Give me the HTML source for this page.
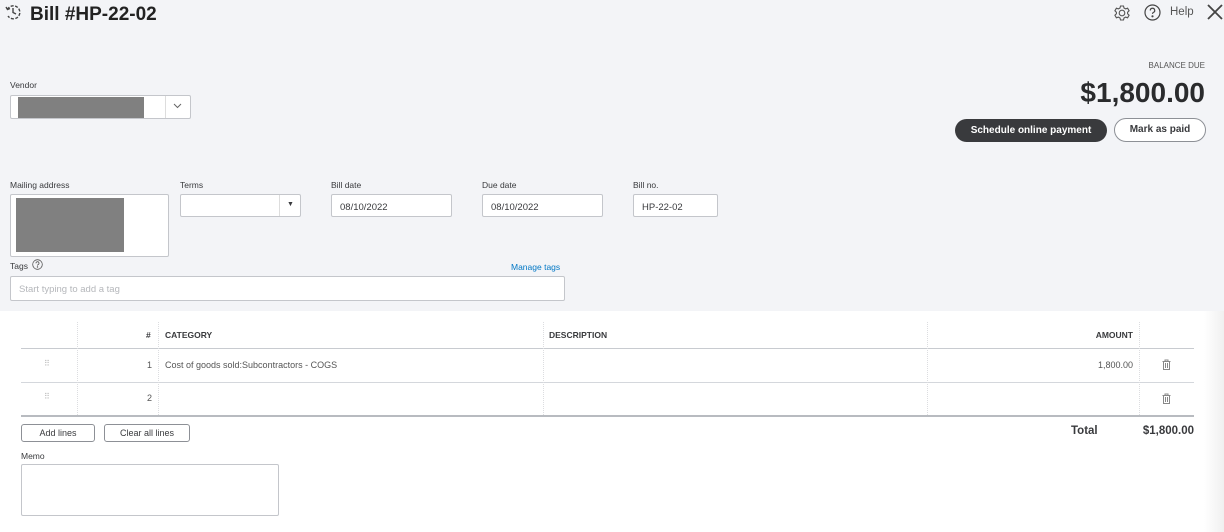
<!DOCTYPE html>
<html><head><meta charset="utf-8"><style>
*{box-sizing:border-box;margin:0;padding:0}
body{width:1224px;height:532px;overflow:hidden;background:#fff;font-family:"Liberation Sans",sans-serif;color:#393a3d;position:relative}
.top{position:absolute;left:0;top:0;width:1224px;height:311px;background:#f3f4f7}
.a{position:absolute}
.lbl{font-size:8.5px;color:#393a3d}
.box{position:absolute;background:#fff;border:1px solid #c4c6cb;border-radius:2px}
.in{font-size:9.5px;color:#393a3d;padding:7px 0 0 8px}
.btn{position:absolute;border:1px solid #8d9096;border-radius:3px;background:#fff;font-size:9px;text-align:center;line-height:16px}
.grad{position:absolute;right:0;top:311px;width:20px;height:221px;background:linear-gradient(90deg,#fff,#f0f0f0)}
.hl{position:absolute;height:1px;background:#d4d7dc}
.vl{position:absolute;width:0;border-left:1px dotted #dcdde0}
.th{position:absolute;font-size:8.5px;font-weight:bold;top:330px}
.td{position:absolute;font-size:9px;color:#555}
</style></head><body>
<div class="top"></div>
<div class="grad"></div>
<svg class="a" style="left:4px;top:3px" width="18" height="18" viewBox="0 0 18 18" fill="none" stroke="#444" stroke-width="1.4"><path d="M3.5 6.5A6.5 6.5 0 1 1 4 13" stroke-dasharray="3 1.5"/><path d="M9 5v4.5l3 1.5"/><path d="M2 4l1.5 2.5 2.5-1"/></svg>
<div class="a" style="left:30px;top:4px;font-size:19px;font-weight:bold;color:#222">Bill #HP-22-02</div>
<svg class="a" style="left:1113px;top:4px" width="18" height="18" viewBox="0 0 18 18" fill="none" stroke="#555" stroke-width="1.1"><circle cx="9" cy="9" r="2.8"/><path d="M7.5 2h3l.5 2 1.6.9 2-.7 1.5 2.6-1.5 1.4v1.6l1.5 1.4-1.5 2.6-2-.7-1.6.9-.5 2h-3l-.5-2-1.6-.9-2 .7L1.9 11.2 3.4 9.8V8.2L1.9 6.8l1.5-2.6 2 .7L7 4z"/></svg>
<svg class="a" style="left:1144px;top:4px" width="17" height="17" viewBox="0 0 17 17" fill="none" stroke="#444" stroke-width="1.2"><circle cx="8.5" cy="8.5" r="7.5"/><path d="M6.3 6.5a2.2 2.2 0 1 1 3 2c-.6.3-.8.7-.8 1.4"/><circle cx="8.5" cy="12.3" r=".5" fill="#444"/></svg>
<div class="a" style="left:1170px;top:6px;font-size:11.5px;color:#555">Help</div>
<svg class="a" style="left:1206px;top:3px" width="18" height="18" viewBox="0 0 18 18" stroke="#444" stroke-width="1.8"><path d="M2 2l14 14M16 2L2 16"/></svg>
<div class="a lbl" style="left:10px;top:80px">Vendor</div>
<div class="box" style="left:10px;top:95px;width:181px;height:24px"></div>
<div class="a" style="left:18px;top:97px;width:126px;height:21px;background:#808080"></div>
<div class="a" style="left:165px;top:96px;width:1px;height:22px;background:#ddd"></div>
<svg class="a" style="left:173px;top:103px" width="9" height="6" viewBox="0 0 9 6" fill="none" stroke="#666"><path d="M1 1l3.5 3.5L8 1"/></svg>
<div class="a" style="right:19px;top:61px;font-size:8px;color:#555">BALANCE DUE</div>
<div class="a" style="right:19px;top:77px;font-size:28px;font-weight:bold;color:#2a2b2d">$1,800.00</div>
<div class="a" style="left:955px;top:119px;width:152px;height:23px;background:#393a3d;border-radius:12px;color:#fff;font-size:10px;font-weight:bold;text-align:center;line-height:23px">Schedule online payment</div>
<div class="a" style="left:1114px;top:118px;width:92px;height:24px;border:1px solid #8d9096;border-radius:12px;background:#fff;font-size:10px;font-weight:bold;text-align:center;line-height:22px">Mark as paid</div>
<div class="a lbl" style="left:10px;top:180px">Mailing address</div>
<div class="box" style="left:10px;top:194px;width:159px;height:63px"></div>
<div class="a" style="left:16px;top:198px;width:108px;height:54px;background:#808080"></div>
<div class="a lbl" style="left:180px;top:180px">Terms</div>
<div class="box" style="left:180px;top:194px;width:121px;height:23px"></div>
<div class="a" style="left:279px;top:195px;width:1px;height:21px;background:#ddd"></div>
<div class="a" style="left:287px;top:201px;font-size:7px">▼</div>
<div class="a lbl" style="left:331px;top:180px">Bill date</div>
<div class="box in" style="left:331px;top:194px;width:121px;height:23px">08/10/2022</div>
<div class="a lbl" style="left:482px;top:180px">Due date</div>
<div class="box in" style="left:482px;top:194px;width:121px;height:23px">08/10/2022</div>
<div class="a lbl" style="left:633px;top:180px">Bill no.</div>
<div class="box in" style="left:633px;top:194px;width:85px;height:23px">HP-22-02</div>
<div class="a lbl" style="left:10px;top:261px">Tags</div>
<svg class="a" style="left:32px;top:259px" width="11" height="11" viewBox="0 0 11 11" fill="none" stroke="#555" stroke-width=".8"><circle cx="5.5" cy="5.5" r="4.8"/><path d="M4 4.3a1.5 1.5 0 1 1 2 1.3c-.4.2-.5.5-.5 1"/><circle cx="5.5" cy="8" r=".3"/></svg>
<div class="a" style="left:511px;top:262px;font-size:8.5px;color:#0077c5">Manage tags</div>
<div class="box" style="left:10px;top:276px;width:555px;height:25px;font-size:9.5px;color:#b5b7bb;padding:7px 0 0 8px">Start typing to add a tag</div>

<div class="hl" style="left:21px;top:348px;width:1173px;background:#c8cbd0"></div>
<div class="hl" style="left:21px;top:382px;width:1173px"></div>
<div class="hl" style="left:21px;top:415px;width:1173px;height:1.5px;background:#b8bbc0"></div>
<div class="vl" style="left:77px;top:322px;height:93px"></div>
<div class="vl" style="left:158px;top:322px;height:93px"></div>
<div class="vl" style="left:543px;top:322px;height:93px"></div>
<div class="vl" style="left:927px;top:322px;height:93px"></div>
<div class="vl" style="left:1139px;top:322px;height:93px"></div>
<div class="th" style="left:146px">#</div>
<div class="th" style="left:165px">CATEGORY</div>
<div class="th" style="left:549px">DESCRIPTION</div>
<div class="th" style="right:91px">AMOUNT</div>
<div class="td" style="left:44px;top:359px;color:#bbb;font-size:8px">⠿</div>
<div class="td" style="left:44px;top:392px;color:#bbb;font-size:8px">⠿</div>
<div class="td" style="left:147px;top:360px">1</div>
<div class="td" style="left:147px;top:393px">2</div>
<div class="td" style="left:165px;top:360px">Cost of goods sold:Subcontractors - COGS</div>
<div class="td" style="right:91px;top:360px">1,800.00</div>
<svg class="a" style="left:1162px;top:359px" width="9" height="11" viewBox="0 0 9 11" fill="none" stroke="#888"><path d="M.5 2.5h8M3 2.5V1h3v1.5M1.5 2.5v8h6v-8M3.5 4v5M5.5 4v5"/></svg>
<svg class="a" style="left:1162px;top:393px" width="9" height="11" viewBox="0 0 9 11" fill="none" stroke="#888"><path d="M.5 2.5h8M3 2.5V1h3v1.5M1.5 2.5v8h6v-8M3.5 4v5M5.5 4v5"/></svg>
<div class="btn" style="left:21px;top:424px;width:74px;height:18px">Add lines</div>
<div class="btn" style="left:104px;top:424px;width:86px;height:18px">Clear all lines</div>
<div class="a" style="left:1071px;top:425px;font-size:11.5px;font-weight:bold">Total</div>
<div class="a" style="right:30px;top:425px;font-size:11.5px;font-weight:bold">$1,800.00</div>
<div class="a lbl" style="left:21px;top:451px">Memo</div>
<div class="box" style="left:21px;top:464px;width:258px;height:52px"></div>
</body></html>
